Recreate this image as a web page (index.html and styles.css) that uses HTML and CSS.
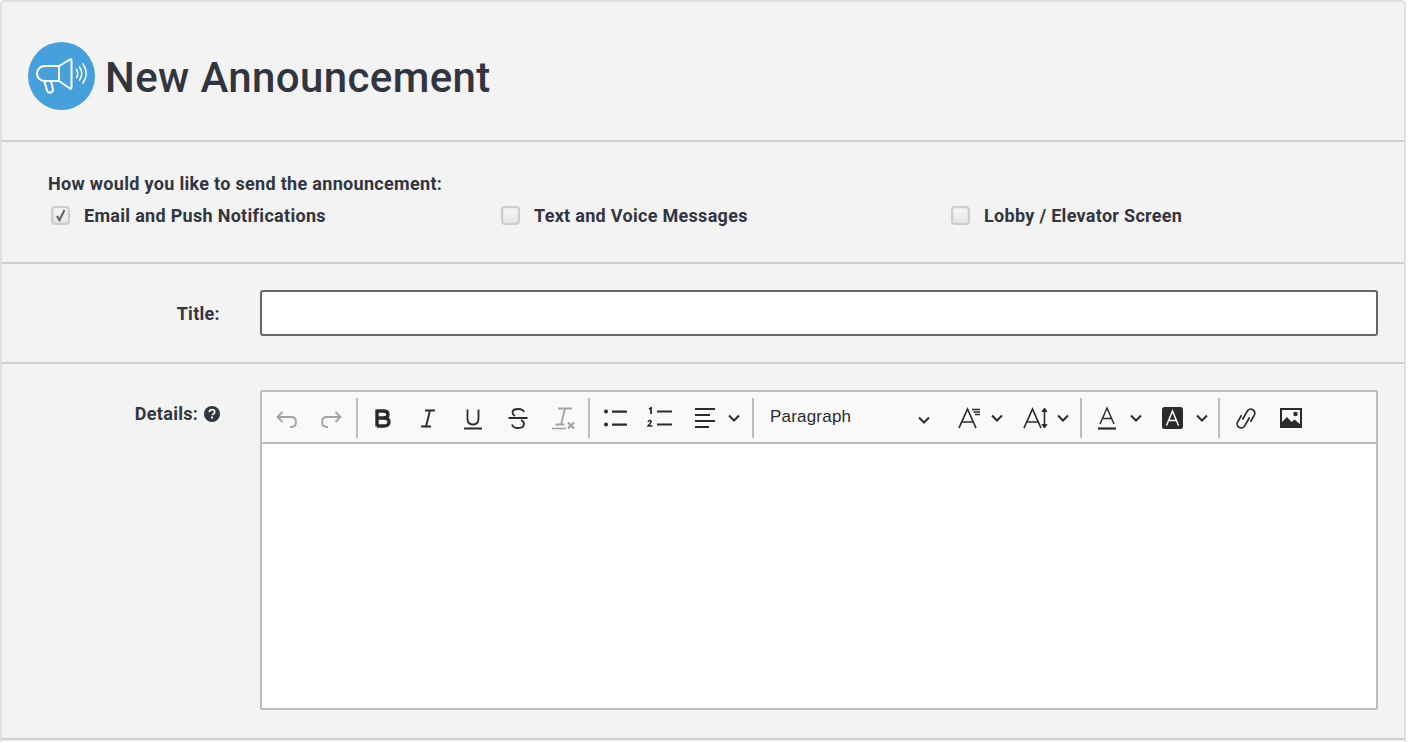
FILE: index.html
```html
<!DOCTYPE html>
<html lang="en">
<head>
<meta charset="utf-8">
<title>New Announcement</title>
<link rel="stylesheet" href="styles.css">
</head>
<body>
<main class="card">
  <header class="head">
    <span class="badge">
      <svg width="67" height="68" viewBox="1 0 67 68" fill="none" stroke="#fff" stroke-width="2" stroke-linejoin="round" stroke-linecap="round">
        <path d="M32 24H17.500a7.500 7.500 0 0 0 0 15H32z"/>
        <path d="M32 24l11-6.500q1.500-.6 1.500 1v27q0 1.600-1.500 1L32 39"/>
        <path d="M17.500 39.500l2.500 9q1 2.600 3.500 2t2.500-3l-2-8"/>
        <path d="M49.500 27.500q2.500 4 0 8M52.500 25q4.500 6.500 0 13M56 22q6.500 9.500 0 19" stroke-width="1.600"/>
      </svg>
    </span>
    <h1 class="head-title">New Announcement</h1>
  </header>

  <section class="send">
    <p class="send-q">How would you like to send the announcement:</p>
    <div class="send-opts">
      <label class="opt"><span class="box"><svg width="12" height="13" viewBox="0 0 12 13" fill="none" stroke="#666" stroke-width="2.200"><path d="M2 7l2.500 4L9.500 1"/></svg></span>Email and Push Notifications</label>
      <label class="opt"><span class="box"></span>Text and Voice Messages</label>
      <label class="opt"><span class="box"></span>Lobby / Elevator Screen</label>
    </div>
  </section>

  <section class="row row-title">
    <div class="row-label">Title:</div>
    <div class="title-input"></div>
  </section>

  <section class="row row-details">
    <div class="row-label">Details:
      <svg class="help" width="16" height="16" viewBox="0 0 16 16"><circle cx="8" cy="8" r="8" fill="#31353f"/><path d="M5.300 6.200q.2-2.500 2.800-2.500 2.600.1 2.600 2.200 0 1.300-1.300 2-1 .6-1 1.400" fill="none" stroke="#f3f3f3" stroke-width="1.800"/><rect x="7" y="10.500" width="2" height="2" fill="#f3f3f3"/></svg>
    </div>
    <div class="editor">
      <div class="toolbar">
        <div class="grp grp-hist">
          <span class="btn btn-44"><svg width="24" height="24" viewBox="0 0 24 24" fill="none" stroke="#a3a3a3" stroke-width="1.800"><path d="M7.500 6L2.500 11l5 5M3 11h13q5 0 5 5t-5 5h-1"/></svg></span>
          <span class="btn btn-44"><svg width="24" height="24" viewBox="0 0 24 24" fill="none" stroke="#a3a3a3" stroke-width="1.800"><path d="M16.500 6l5 5-5 5M21 11H8q-5 0-5 5t5 5h1"/></svg></span>
        </div>
        <div class="grp grp-fmt">
          <span class="btn"><svg width="24" height="24" viewBox="0 0 24 24" fill="none" stroke="#2b2b2b" stroke-width="3.400"><path d="M6 3.500v17M6 5h6.500q4.500 0 4.500 3.500T12.500 12H6M12.500 12q5.500 0 5.500 4t-5.500 4H6"/></svg></span>
          <span class="btn"><svg width="24" height="24" viewBox="0 0 24 24" fill="none" stroke="#2b2b2b" stroke-width="1.900"><path d="M9 4.500h10M5 20.500h10M14 4.500l-4 16"/></svg></span>
          <span class="btn"><svg width="24" height="24" viewBox="0 0 24 24" fill="none" stroke="#2b2b2b" stroke-width="1.800"><path d="M6.500 3.500v9q0 6 5.500 6t5.500-6v-9"/><path d="M3 22.500h18" stroke-width="2"/></svg></span>
          <span class="btn"><svg width="24" height="24" viewBox="0 0 24 24" fill="none" stroke="#2b2b2b" stroke-width="1.800"><path d="M18 6q-1-3-6-3-5.500 0-5.500 3.500 0 2 2.500 3.500M2.500 12h19M15 14q3 1.500 3 4 0 4-6 4-5 0-6-3.500"/></svg></span>
          <span class="btn"><svg width="26" height="26" viewBox="0 0 26 26" fill="none" stroke="#a3a3a3" stroke-width="1.800"><path d="M8 3.500h14M5.500 19.500h9M15 3.500l-4 16"/><path d="M2 23.500h14" stroke-width="1.500"/><path d="M18 17.500l6 6M24 17.500l-6 6" stroke-width="2.200"/></svg></span>
        </div>
        <div class="grp grp-list">
          <span class="btn"><svg width="24" height="24" viewBox="0 0 24 24" fill="#2b2b2b"><circle cx="3" cy="5.500" r="2"/><circle cx="3" cy="18.500" r="2"/><rect x="9" y="4.500" width="15" height="2.200" rx=".5"/><rect x="9" y="17.500" width="15" height="2.200" rx=".5"/></svg></span>
          <span class="btn"><svg width="26" height="24" viewBox="0 0 26 24" fill="none" stroke="#2b2b2b"><path d="M2 3l2-1v6" stroke-width="1.800"/><path d="M1 16q1-2 2.500-1.500 2 1-2.500 5.500h4.500" stroke-width="1.500"/><path d="M10 5.500h15M10 18.500h15" stroke-width="2.200"/></svg></span>
          <span class="btn btn-drop btn-align"><svg width="22" height="22" viewBox="0 0 22 22" fill="none" stroke="#2b2b2b" stroke-width="1.900"><path d="M1 2h20M1 8h15M1 14h20M1 20h14"/></svg><svg class="chev" width="12" height="8" viewBox="0 0 12 8" fill="none" stroke="#2b2b2b" stroke-width="2"><path d="M1 1.500l5 5 5-5"/></svg></span>
        </div>
        <div class="grp grp-style">
          <span class="para">Paragraph<svg width="12" height="8" viewBox="0 0 12 8" fill="none" stroke="#2b2b2b" stroke-width="2"><path d="M1 1.500l5 5 5-5"/></svg></span>
          <span class="btn btn-drop btn-size"><svg width="24" height="24" viewBox="0 0 24 24" fill="none" stroke="#2b2b2b" stroke-width="1.700"><path d="M1 22L9.500 3 18 22M4 16h11"/><path d="M14 3.500h8M15.500 6h6.500M17 8.500h5" stroke-width="1.300"/></svg><svg class="chev" width="12" height="8" viewBox="0 0 12 8" fill="none" stroke="#2b2b2b" stroke-width="2"><path d="M1 1.500l5 5 5-5"/></svg></span>
          <span class="btn btn-drop btn-line"><svg width="26" height="24" viewBox="0 0 26 24" fill="none" stroke="#2b2b2b" stroke-width="1.700"><path d="M1 22L9.500 3 18 22M4 16h11"/><path d="M21.500 4v16" stroke-width="1.600"/><path d="M19 5.500L21.500 2 24 5.500zM19 18.500L21.500 22 24 18.500z" fill="#2b2b2b" stroke-width="1"/></svg><svg class="chev" width="12" height="8" viewBox="0 0 12 8" fill="none" stroke="#2b2b2b" stroke-width="2"><path d="M1 1.500l5 5 5-5"/></svg></span>
        </div>
        <div class="grp grp-color">
          <span class="btn btn-drop btn-fg"><svg width="20" height="24" viewBox="0 0 20 24" fill="none" stroke="#2b2b2b" stroke-width="1.500"><path d="M3 18L10 2l7 16M5.500 12.500h9"/><path d="M1 22.500h18" stroke-width="2.200"/></svg><svg class="chev" width="12" height="8" viewBox="0 0 12 8" fill="none" stroke="#2b2b2b" stroke-width="2"><path d="M1 1.500l5 5 5-5"/></svg></span>
          <span class="btn btn-drop btn-bg"><svg width="21" height="22" viewBox="0 0 21 22"><rect width="21" height="22" rx="2.500" fill="#2b2b2b"/><path d="M4.500 18.500L10.500 4l6 14.500M6.500 13.500h8" fill="none" stroke="#fff" stroke-width="1.500"/></svg><svg class="chev" width="12" height="8" viewBox="0 0 12 8" fill="none" stroke="#2b2b2b" stroke-width="2"><path d="M1 1.500l5 5 5-5"/></svg></span>
        </div>
        <div class="grp grp-insert">
          <span class="btn btn-link"><svg width="22" height="24" viewBox="0 0 22 24" fill="none" stroke="#2b2b2b" stroke-width="1.700" stroke-linecap="round"><path d="M15.800 15.200L19.300 9.150A4 4 0 0 0 12.300 5.150L7.800 13"/><path d="M6.200 9.800L2.700 15.850A4 4 0 0 0 9.700 19.850L14.200 12"/></svg></span>
          <span class="btn btn-image"><svg width="22" height="20" viewBox="0 0 22 20"><rect x="1" y="1" width="20" height="18" fill="none" stroke="#2b2b2b" stroke-width="2"/><path d="M1 19v-4l6-6 4.500 5 3-2.500L21 17v2z" fill="#2b2b2b"/><circle cx="15.500" cy="6" r="2.300" fill="#2b2b2b"/></svg></span>
        </div>
      </div>
      <div class="editor-body"></div>
    </div>
  </section>
</main>
</body>
</html>
```
FILE: styles.css
```css
* { box-sizing: border-box; }
html, body { margin: 0; padding: 0; background: #fff; }
body {
  width: 1408px;
  height: 742px;
  overflow: hidden;
  font-family: Roboto, "Liberation Sans", sans-serif;
  color: #31353f;
}
.card {
  width: 1406px;
  height: 742px;
  background: #f3f3f3;
  border: 2px solid #dfdfdf;
  border-bottom: 0;
  border-radius: 5px 5px 0 0;
}
.head {
  height: 140px;
  display: flex;
  align-items: center;
  padding: 10px 0 0 26px;
  border-bottom: 2px solid #cfcfcf;
}
.badge {
  width: 67px;
  height: 68px;
  border-radius: 50%;
  background: #45a0dc;
  display: flex;
}
.head-title {
  margin: 4px 0 0 10px;
  font-size: 42px;
  font-weight: 500;
  line-height: 50px;
  letter-spacing: .38px;
}
.send {
  height: 122px;
  padding: 31px 46px 0;
  border-bottom: 2px solid #cfcfcf;
}
.send-q {
  margin: 0;
  font-size: 18px;
  font-weight: 700;
  line-height: 22px;
  letter-spacing: .31px;
}
.send-opts {
  display: flex;
  margin-top: 10px;
}
.opt {
  width: 450px;
  flex: none;
  display: flex;
  align-items: center;
  font-size: 18px;
  font-weight: 700;
  line-height: 22px;
  letter-spacing: .3px;
  padding-left: 3px;
}
.box {
  width: 19px;
  height: 19px;
  flex: none;
  margin: 0 14px 2px 0;
  border: 2px solid #cdcdcd;
  border-radius: 4px;
  background: linear-gradient(#f7f7f7, #e6e6e6);
  box-shadow: inset 0 0 2px #d4d4d4;
  display: flex;
  align-items: center;
  justify-content: center;
}
.row { display: flex; }
.row-label {
  width: 258px;
  flex: none;
  padding-right: 40px;
  text-align: right;
  font-size: 18px;
  font-weight: 700;
  line-height: 22px;
  letter-spacing: .3px;
}
.row-title {
  height: 100px;
  padding-top: 26px;
  border-bottom: 2px solid #cfcfcf;
}
.row-title .row-label { padding-top: 13px; }
.title-input {
  width: 1118px;
  height: 46px;
  background: #fff;
  border: 2px solid #666;
  border-radius: 3px;
}
.row-details {
  height: 376px;
  padding-top: 26px;
  border-bottom: 2px solid #cfcfcf;
}
.row-details .row-label { padding-top: 13px; }
.help { vertical-align: -2px; margin-left: 1px; }
.editor {
  width: 1118px;
  height: 320px;
  border: 2px solid #bdbdbd;
  border-radius: 2px;
  display: flex;
  flex-direction: column;
}
.toolbar {
  height: 52px;
  flex: none;
  display: flex;
  align-items: center;
  padding-top: 2px;
  background: #f9f9f9;
  border-bottom: 2px solid #bdbdbd;
}
.editor-body { flex: 1; background: #fff; }
.grp {
  height: 40px;
  display: flex;
  align-items: center;
  border-left: 2px solid #bdbdbd;
}
.grp-hist { width: 94px; padding-left: 3px; border-left: 0; }
.grp-fmt { width: 232px; padding-left: 2px; }
.grp-list { width: 164px; padding-left: 2px; }
.grp-style { width: 328px; }
.grp-color { width: 138px; }
.btn {
  width: 45px;
  height: 40px;
  flex: none;
  display: flex;
  align-items: center;
  justify-content: center;
}
.btn-44 { width: 44px; }
.btn-drop { justify-content: flex-start; }
.chev { flex: none; }
.btn-align { width: 70px; padding-left: 12px; }
.btn-align .chev { margin-left: 12px; }
.para {
  width: 200px;
  flex: none;
  display: flex;
  align-items: center;
  justify-content: space-between;
  padding: 0 24px 2px 16px;
  font-family: "Liberation Sans", Arial, sans-serif;
  font-size: 17px;
  letter-spacing: .2px;
  color: #2b2b2b;
}
.para svg { margin-top: 5px; }
.btn-size { width: 68px; padding-left: 4px; }
.btn-size .chev { margin-left: 9px; }
.btn-line { width: 58px; padding-left: 1px; }
.btn-line .chev { margin-left: 8px; }
.btn-fg { width: 66px; padding-left: 15px; }
.btn-fg .chev { margin-left: 13px; }
.btn-bg { width: 70px; padding-left: 14px; }
.btn-bg .chev { margin-left: 13px; }
.btn-link { margin-left: 3px; }
```
